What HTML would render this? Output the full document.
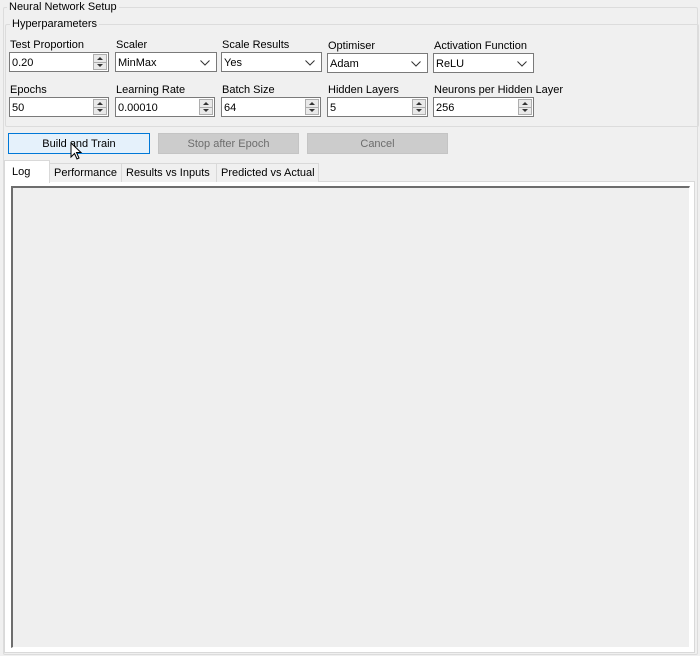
<!DOCTYPE html><html><head><style>
body{margin:0;width:700px;height:656px;background:#f0f0f0;font-family:"Liberation Sans",sans-serif;font-size:11px;color:#000;position:relative;overflow:hidden}
.a{position:absolute;white-space:nowrap}
.gb{position:absolute;border:1px solid #dcdcdc;border-radius:2px}
.lg{position:absolute;background:#f0f0f0;padding:0 2px}
.in{position:absolute;height:20px;background:#fff;border:1px solid #7a7a7a;box-sizing:border-box;padding:4px 2px;line-height:12px}
.sp{position:absolute;right:1px;top:1px;width:14px;height:16px;border:1px solid #adadad;background:#e9e9e9;box-sizing:border-box}
.sp:before{content:"";position:absolute;left:3px;top:2px;border:3px solid transparent;border-bottom:3px solid #333;border-top:0}
.sp:after{content:"";position:absolute;left:3px;bottom:2px;border:3px solid transparent;border-top:3px solid #333;border-bottom:0}
.sp i{position:absolute;left:0;right:0;top:7px;border-top:1px solid #adadad}
.cb svg{position:absolute;right:6px;top:7px}
.btn{position:absolute;height:21px;box-sizing:border-box;text-align:center;line-height:21px}
.tab{position:absolute;top:163px;height:19px;box-sizing:border-box;border:1px solid #d9d9d9;border-bottom:none;padding:3px 4px;line-height:13px;background:#f0f0f0;white-space:nowrap;overflow:hidden}
</style></head><body>
<div class="gb" style="left:3px;top:7px;width:693px;height:646px"></div>
<div class="lg" style="left:7px;top:1px">Neural Network Setup</div>
<div class="gb" style="left:5px;top:24px;width:692px;height:101px"></div>
<div class="lg" style="left:10px;top:18px">Hyperparameters</div>

<div class="a" style="left:10px;top:39px">Test Proportion</div>
<div class="in" style="left:9px;top:52px;width:100px">0.20<div class="sp"><i></i></div></div>
<div class="a" style="left:116px;top:39px">Scaler</div>
<div class="in cb" style="left:115px;top:52px;width:102px">MinMax<svg width="10" height="6"><path d="M0.5 0.5L5 5L9.5 0.5" stroke="#333" fill="none"/></svg></div>
<div class="a" style="left:222px;top:39px">Scale Results</div>
<div class="in cb" style="left:221px;top:52px;width:101px">Yes<svg width="10" height="6"><path d="M0.5 0.5L5 5L9.5 0.5" stroke="#333" fill="none"/></svg></div>
<div class="a" style="left:328px;top:40px">Optimiser</div>
<div class="in cb" style="left:327px;top:53px;width:101px">Adam<svg width="10" height="6"><path d="M0.5 0.5L5 5L9.5 0.5" stroke="#333" fill="none"/></svg></div>
<div class="a" style="left:434px;top:40px">Activation Function</div>
<div class="in cb" style="left:433px;top:53px;width:101px">ReLU<svg width="10" height="6"><path d="M0.5 0.5L5 5L9.5 0.5" stroke="#333" fill="none"/></svg></div>

<div class="a" style="left:10px;top:84px">Epochs</div>
<div class="in" style="left:9px;top:97px;width:100px">50<div class="sp"><i></i></div></div>
<div class="a" style="left:116px;top:84px">Learning Rate</div>
<div class="in" style="left:115px;top:97px;width:100px">0.00010<div class="sp"><i></i></div></div>
<div class="a" style="left:222px;top:84px">Batch Size</div>
<div class="in" style="left:221px;top:97px;width:100px">64<div class="sp"><i></i></div></div>
<div class="a" style="left:328px;top:84px">Hidden Layers</div>
<div class="in" style="left:327px;top:97px;width:101px">5<div class="sp"><i></i></div></div>
<div class="a" style="left:434px;top:84px">Neurons per Hidden Layer</div>
<div class="in" style="left:433px;top:97px;width:101px">256<div class="sp"><i></i></div></div>

<div class="btn" style="left:8px;top:133px;width:142px;border:1px solid #0078d7;background:#e5f1fb">Build and Train</div>
<div class="btn" style="left:158px;top:133px;width:141px;background:#cccccc;color:#6d6d6d;border:1px solid #c4c4c4">Stop after Epoch</div>
<div class="btn" style="left:307px;top:133px;width:141px;background:#cccccc;color:#6d6d6d;border:1px solid #c4c4c4">Cancel</div>
<svg class="a" style="left:70px;top:142px" width="14" height="20"><path d="M1 1L1 15L4.5 11.5L7 17L9 16L6.5 10.5L11 10.5Z" fill="#fff" stroke="#000" stroke-width="1"/></svg>

<div class="a" style="left:4px;top:181px;width:691px;height:472px;border:1px solid #d9d9d9;background:#fff;box-sizing:border-box"></div>
<div class="a" style="left:11px;top:186px;width:679px;height:462px;background:#efefef;border-top:2px solid #6d6d6d;border-left:2px solid #6d6d6d;border-right:1px solid #fff;border-bottom:1px solid #fff;box-sizing:border-box"></div>
<div class="tab" style="left:49px;width:73px">Performance</div>
<div class="tab" style="left:121px;width:96px">Results vs Inputs</div>
<div class="tab" style="left:216px;width:103px">Predicted vs Actual</div>
<div class="tab" style="left:4px;top:160px;height:23px;width:46px;background:#fff;padding-top:5px;padding-left:7px">Log</div>
</body></html>
